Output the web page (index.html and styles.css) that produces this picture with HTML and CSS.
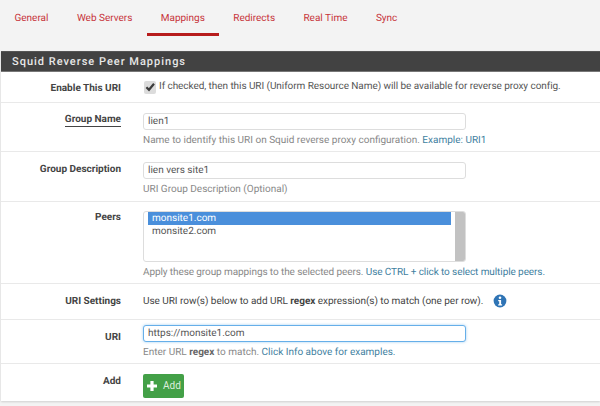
FILE: index.html
```html
<!DOCTYPE html>
<html lang="en">
<head>
<meta charset="utf-8">
<title>Squid Reverse Peer Mappings</title>
<link rel="stylesheet" href="styles.css">
</head>
<body>
<nav class="tabs">
  <a class="tab">General</a>
  <a class="tab">Web Servers</a>
  <a class="tab active">Mappings</a>
  <a class="tab">Redirects</a>
  <a class="tab">Real Time</a>
  <a class="tab">Sync</a>
</nav>
<section class="panel">
  <h2 class="heading">Squid Reverse Peer Mappings</h2>
  <div class="row row-enable">
    <div class="label">Enable This URI</div>
    <div class="field check-line">
      <span class="checkbox"><svg viewBox="0 0 12 12" width="12" height="12"><path d="M2.4 6.2 5 8.8 10 2.8" fill="none" stroke="#3c3c3c" stroke-width="2.2"/></svg></span>
      <span class="tight-check">If checked, then this URI (Uniform Resource Name) will be available for reverse proxy config.</span>
    </div>
  </div>
  <div class="row row-name">
    <div class="label"><span class="underlined">Group Name</span></div>
    <div class="field">
      <div class="input">lien1</div>
      <p class="help">Name to identify this URI on Squid reverse proxy configuration. <a class="link">Example: URI1</a></p>
    </div>
  </div>
  <div class="row row-desc">
    <div class="label">Group Description</div>
    <div class="field">
      <div class="input">lien vers site1</div>
      <p class="help">URI Group Description (Optional)</p>
    </div>
  </div>
  <div class="row row-peers">
    <div class="label">Peers</div>
    <div class="field">
      <div class="select">
        <div class="options">
          <div class="option selected">monsite1.com</div>
          <div class="option">monsite2.com</div>
        </div>
        <div class="scrollbar"></div>
      </div>
      <p class="help tight">Apply these group mappings to the selected peers. <a class="link">Use CTRL + click to select multiple peers.</a></p>
    </div>
  </div>
  <div class="row row-settings">
    <div class="label">URI Settings</div>
    <div class="field settings-line">
      <span class="slight">Use URI row(s) below to add URL <b>regex</b> expression(s) to match (one per row).</span>
      <svg class="info" viewBox="0 0 14 14" width="14" height="14"><circle cx="7" cy="7" r="6.4" fill="#2f74b5"/><circle cx="7" cy="3.7" r="1.3" fill="#fff"/><path d="M5.2 6h2.9v4.2h1v1.2H5.2v-1.2h1V7.2h-1z" fill="#fff"/></svg>
    </div>
  </div>
  <div class="row row-uri">
    <div class="label label-uri">URI</div>
    <div class="field">
      <div class="input focused">https://monsite1.com</div>
      <p class="help">Enter URL <b>regex</b> to match. <a class="link">Click Info above for examples.</a></p>
    </div>
  </div>
  <div class="row row-add">
    <div class="label">Add</div>
    <div class="field">
      <button class="btn"><svg viewBox="0 0 12 12" width="12" height="12"><path d="M4.4 1h3.2v3.4H11v3.2H7.6V11H4.4V7.6H1V4.4h3.4z" fill="#fff"/></svg><span>Add</span></button>
    </div>
  </div>
</section>
</body>
</html>
```

FILE: styles.css
```css
* { box-sizing: border-box; }
html, body { margin: 0; padding: 0; }
body {
  width: 600px;
  height: 406px;
  overflow: hidden;
  background: #f3f3f3;
  font-family: Roboto, "Liberation Sans", sans-serif;
  font-size: 10px;
  line-height: 14px;
  color: #555;
  text-rendering: geometricPrecision;
}
.tabs {
  display: flex;
  height: 36px;
  margin-bottom: 15px;
  padding-left: 0.3px;
}
.tab {
  padding: 12px 14.2px 0;
  color: #c7343a;
  height: 36px;
  line-height: 14px;
}
.tab.active { border-bottom: 3px solid #b71c1c; }
.panel {
  margin-left: 1px;
  background: #fff;
  height: 350px;
  box-shadow: 0 1px 2px rgba(0,0,0,.15);
}
.heading {
  margin: 0;
  height: 21px;
  padding-left: 11px;
  background: #424242;
  border-top: 1px solid #555;
  border-bottom: 1px solid #777;
  color: #e8e8e8;
  font-size: 11px;
  font-weight: 500;
  letter-spacing: 1px;
  line-height: 19px;
}
.row {
  display: flex;
  border-bottom: 1px solid #e9e9e9;
}
.row-enable { height: 31px; }
.row-name { height: 49px; }
.row-desc { height: 50px; }
.row-peers { height: 82px; }
.row-settings { height: 36px; }
.row-uri { height: 44px; }
.row-add { height: 37px; border-bottom: 0; }
.label {
  width: 120px;
  text-align: right;
  font-weight: 700;
  color: #444;
  padding-top: 10px;
  flex: none;
}
.row-desc .label { padding-top: 11px; }
.row-peers .label { padding-top: 9px; }
.row-settings .label { padding-top: 11px; }
.label-uri { padding-top: 11px; }
.row-add .label { padding-top: 11px; }
.underlined { border-bottom: 1px solid #444; padding-bottom: 1px; }
.field { margin-left: 22px; flex: none; width: 440px; color: #555; }
.check-line { display: flex; align-items: center; gap: 3px; height: 30px; }
.tight-check { letter-spacing: -0.06px; }
.tight { letter-spacing: -0.09px; }
.slight { letter-spacing: -0.035px; }
.checkbox {
  width: 12px;
  height: 13px;
  background: #dcdcdc;
  border-radius: 2px;
  display: flex;
  align-items: center;
  justify-content: center;
  margin-left: 1px;
}
.input {
  width: 323px;
  height: 17px;
  margin-top: 10px;
  padding-left: 4px;
  border: 1px solid #ddd;
  border-radius: 3px;
  line-height: 16px;
  color: #555;
  background: #fff;
}
.row-uri .input { margin-top: 5px; }
.input.focused {
  border-color: #66afe9;
  box-shadow: 0 0 3px rgba(102,175,233,.6);
}
.help { margin: 4px 0 0; color: #888; line-height: 14px; }
.link { color: #3f7f9f; }
.help b { color: #666; }
.select {
  display: flex;
  width: 323px;
  height: 51px;
  margin-top: 9px;
  border: 1px solid #ddd;
  border-radius: 3px;
  background: #fff;
  padding-left: 4px;
  overflow: hidden;
}
.options { width: 304px; margin-right: 4px; }
.option { height: 12.5px; line-height: 13px; padding-left: 4px; color: #555; }
.option.selected { background: #4a8fdb; color: #fff; }
.scrollbar { width: 10px; background: #c2c2c2; }
.settings-line { display: flex; align-items: center; gap: 10px; height: 35px; color: #444; }
.settings-line svg { flex: none; margin-top: -1px; }
.btn {
  display: flex;
  align-items: center;
  gap: 5px;
  width: 41px;
  height: 24px;
  margin-top: 10px;
  padding: 0 0 0 3px;
  border: 0;
  border-radius: 2px;
  background: #43a047;
  color: #ddeedd;
  font: inherit;
}
```
